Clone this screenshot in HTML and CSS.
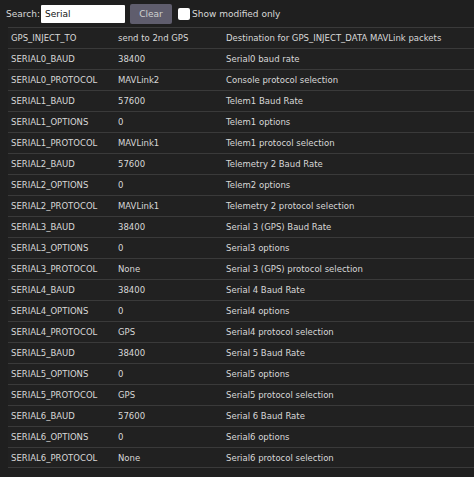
FILE: index.html
```html
<!DOCTYPE html>
<html>
<head>
<meta charset="utf-8">
<link rel="stylesheet" href="styles.css">
</head>
<body>
<div class="toolbar">
  <label class="search-label">Search:</label>
  <input class="search-input" type="text" value="Serial">
  <button class="clear-btn">Clear</button>
  <span class="check"></span>
  <span class="check-label">Show modified only</span>
</div>
<div class="table">
  <div class="row"><span class="c1">GPS_INJECT_TO</span><span class="c2">send to 2nd GPS</span><span class="c3">Destination for GPS_INJECT_DATA MAVLink packets</span></div>
  <div class="row"><span class="c1">SERIAL0_BAUD</span><span class="c2">38400</span><span class="c3">Serial0 baud rate</span></div>
  <div class="row"><span class="c1">SERIAL0_PROTOCOL</span><span class="c2">MAVLink2</span><span class="c3">Console protocol selection</span></div>
  <div class="row"><span class="c1">SERIAL1_BAUD</span><span class="c2">57600</span><span class="c3">Telem1 Baud Rate</span></div>
  <div class="row"><span class="c1">SERIAL1_OPTIONS</span><span class="c2">0</span><span class="c3">Telem1 options</span></div>
  <div class="row"><span class="c1">SERIAL1_PROTOCOL</span><span class="c2">MAVLink1</span><span class="c3">Telem1 protocol selection</span></div>
  <div class="row"><span class="c1">SERIAL2_BAUD</span><span class="c2">57600</span><span class="c3">Telemetry 2 Baud Rate</span></div>
  <div class="row"><span class="c1">SERIAL2_OPTIONS</span><span class="c2">0</span><span class="c3">Telem2 options</span></div>
  <div class="row"><span class="c1">SERIAL2_PROTOCOL</span><span class="c2">MAVLink1</span><span class="c3">Telemetry 2 protocol selection</span></div>
  <div class="row"><span class="c1">SERIAL3_BAUD</span><span class="c2">38400</span><span class="c3">Serial 3 (GPS) Baud Rate</span></div>
  <div class="row"><span class="c1">SERIAL3_OPTIONS</span><span class="c2">0</span><span class="c3">Serial3 options</span></div>
  <div class="row"><span class="c1">SERIAL3_PROTOCOL</span><span class="c2">None</span><span class="c3">Serial 3 (GPS) protocol selection</span></div>
  <div class="row"><span class="c1">SERIAL4_BAUD</span><span class="c2">38400</span><span class="c3">Serial 4 Baud Rate</span></div>
  <div class="row"><span class="c1">SERIAL4_OPTIONS</span><span class="c2">0</span><span class="c3">Serial4 options</span></div>
  <div class="row"><span class="c1">SERIAL4_PROTOCOL</span><span class="c2">GPS</span><span class="c3">Serial4 protocol selection</span></div>
  <div class="row"><span class="c1">SERIAL5_BAUD</span><span class="c2">38400</span><span class="c3">Serial 5 Baud Rate</span></div>
  <div class="row"><span class="c1">SERIAL5_OPTIONS</span><span class="c2">0</span><span class="c3">Serial5 options</span></div>
  <div class="row"><span class="c1">SERIAL5_PROTOCOL</span><span class="c2">GPS</span><span class="c3">Serial5 protocol selection</span></div>
  <div class="row"><span class="c1">SERIAL6_BAUD</span><span class="c2">57600</span><span class="c3">Serial 6 Baud Rate</span></div>
  <div class="row"><span class="c1">SERIAL6_OPTIONS</span><span class="c2">0</span><span class="c3">Serial6 options</span></div>
  <div class="row"><span class="c1">SERIAL6_PROTOCOL</span><span class="c2">None</span><span class="c3">Serial6 protocol selection</span></div>
</div>
</body>
</html>
```

FILE: styles.css
```css
html, body {
  margin: 0;
  padding: 0;
  background: #1f1f1f;
  color: #d8d8d8;
  font-family: "DejaVu Sans", sans-serif;
  font-size: 8.5px;
  width: 474px;
  height: 477px;
  overflow: hidden;
}
.toolbar {
  height: 27px;
  display: flex;
  align-items: center;
  box-sizing: border-box;
  padding-left: 6px;
}
.search-label {
  font-size: 9px;
  width: 35px;
}
.search-input {
  width: 84px;
  height: 18px;
  box-sizing: border-box;
  border: none;
  border-radius: 1px;
  background: #ffffff;
  color: #111;
  font-family: "DejaVu Sans", sans-serif;
  font-size: 9px;
  padding: 0 4px;
  margin: 0;
  outline: none;
}
.clear-btn {
  margin: 0 0 0 5px;
  width: 42px;
  height: 20px;
  border: none;
  border-radius: 2px;
  background: #5f5d6d;
  color: #d0d0d0;
  font-family: "DejaVu Sans", sans-serif;
  font-size: 9px;
  padding: 0;
}
.check {
  margin-left: 6px;
  width: 12px;
  height: 12px;
  background: #fff;
  border-radius: 2px;
}
.check-label {
  margin-left: 2px;
  font-size: 9px;
}
.table {
  margin-left: 8px;
  background: #212121;
}
.row {
  height: 21px;
  display: flex;
  align-items: center;
  border-top: 1px solid #3a3a3a;
  box-sizing: border-box;
}
.row:last-child {
  border-bottom: 1px solid #3a3a3a;
}
.c1 { width: 110px; padding-left: 3px; box-sizing: border-box; }
.c2 { width: 108px; }
.c3 { flex: 1; }
```
